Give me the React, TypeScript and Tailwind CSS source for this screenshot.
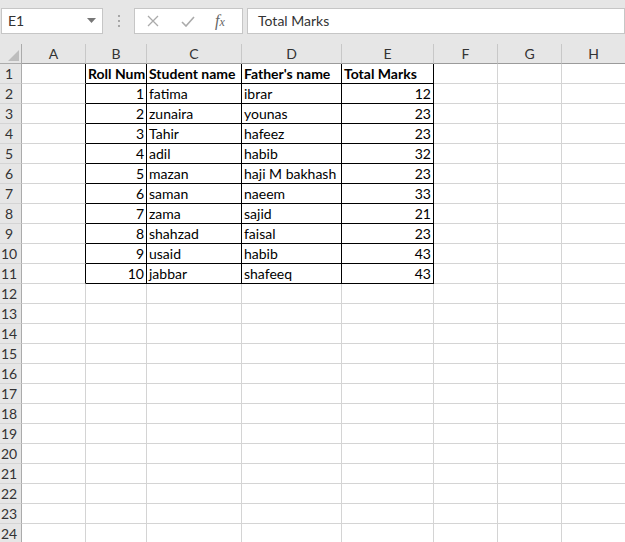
import React from "react";

const cols = [
  { label: "A", w: "w-[64px]" },
  { label: "B", w: "w-[61px]" },
  { label: "C", w: "w-[95px]" },
  { label: "D", w: "w-[100px]" },
  { label: "E", w: "w-[92px]" },
  { label: "F", w: "w-[64px]" },
  { label: "G", w: "w-[64px]" },
  { label: "H", w: "w-[64px]" },
];

const students = [
  [1, "fatima", "ibrar", 12],
  [2, "zunaira", "younas", 23],
  [3, "Tahir", "hafeez", 23],
  [4, "adil", "habib", 32],
  [5, "mazan", "haji M bakhash", 23],
  [6, "saman", "naeem", 33],
  [7, "zama", "sajid", 21],
  [8, "shahzad", "faisal", 23],
  [9, "usaid", "habib", 43],
  [10, "jabbar", "shafeeq", 43],
];

const cellText = (r: number, c: number): { text: string; right?: boolean; bold?: boolean } => {
  if (r === 1) {
    const h = ["", "Roll Num", "Student name", "Father's name", "Total Marks"];
    return { text: h[c] ?? "", bold: true };
  }
  const s = students[r - 2];
  if (!s || c < 1 || c > 4) return { text: "" };
  const v = s[c - 1];
  return { text: String(v), right: c === 1 || c === 4 };
};

const Toolbar = () => (
  <div className="h-[44px] bg-[#e6e6e6] flex items-start pt-[8px] text-[#333]">
    <div className="ml-[1px] w-[102px] h-[26px] bg-white border border-[#c6c6c6] flex items-center justify-between pl-[6px] pr-[6px] pb-[1px] text-[14px]">
      <span>E1</span>
      <svg width="9" height="5" viewBox="0 0 9 5"><path d="M0 0h9L4.5 5z" fill="#777" /></svg>
    </div>
    <div className="w-[31px] h-[26px] flex flex-col items-center justify-center gap-[3px]">
      <span className="w-[2px] h-[2px] bg-[#a6a6a6]" />
      <span className="w-[2px] h-[2px] bg-[#a6a6a6]" />
      <span className="w-[2px] h-[2px] bg-[#a6a6a6]" />
    </div>
    <div className="w-[109px] h-[26px] bg-white border border-[#c6c6c6] flex items-center">
      <svg className="ml-[12px]" width="12" height="12" viewBox="0 0 12 12">
        <path d="M1 1l10 10M11 1L1 11" stroke="#aaa" strokeWidth="1.3" />
      </svg>
      <svg className="ml-[22px]" width="14" height="11" viewBox="0 0 14 11">
        <path d="M1 6l4 4 8-9" stroke="#aaa" strokeWidth="1.6" fill="none" />
      </svg>
      <span
        className="ml-[20px] text-[16px] italic text-[#666] leading-none"
        style={{ fontFamily: "'Liberation Serif', serif" }}
      >
        f<span className="text-[12px]">x</span>
      </span>
    </div>
    <div className="ml-[4px] flex-1 h-[26px] bg-white border border-[#c6c6c6] flex items-center pl-[10px] pb-[1px] text-[14px]">
      Total Marks
    </div>
  </div>
);

export default function App() {
  const rows = Array.from({ length: 24 }, (_, i) => i + 1);
  return (
    <div className="w-[625px] h-[542px] overflow-hidden bg-white" style={{ fontFamily: "Lato, 'Open Sans', sans-serif" }}>
      <Toolbar />
      <div className="flex h-[20px] text-[14px] text-[#333]">
        <div className="w-[22px] shrink-0 bg-[#e6e6e6] border-r border-b border-[#ababab] flex items-end justify-end">
          <svg width="11" height="11" viewBox="0 0 11 11" className="mr-[2px] mb-[2px]"><path d="M11 0v11H0z" fill="#bdbdbd" /></svg>
        </div>
        {cols.map((c) => (
          <div key={c.label} className={`${c.w} shrink-0 bg-[#e6e6e6] border-r border-r-[#c8c8c8] border-b border-b-[#9b9b9b] flex items-center justify-center`}>
            {c.label}
          </div>
        ))}
      </div>
      {rows.map((r) => (
        <div key={r} className="flex h-[20px] text-[14px] text-black">
          <div className="w-[22px] shrink-0 bg-[#e6e6e6] border-r border-r-[#ababab] border-b border-b-[#d4d4d4] flex items-center justify-center pr-[3px] text-[#333]">
            {r}
          </div>
          {cols.map((c, ci) => {
            const inTable = r <= 11 && ci >= 1 && ci <= 4;
            const leftOfTable = r <= 11 && ci === 0;
            const t = cellText(r, ci);
            const br = inTable || leftOfTable ? "border-r-black" : "border-r-[#d4d4d4]";
            const bb = inTable ? "border-b-black" : "border-b-[#d4d4d4]";
            return (
              <div
                key={c.label}
                className={`${c.w} shrink-0 border-r border-b ${br} ${bb} flex items-center px-[2px] whitespace-nowrap overflow-hidden ${t.right ? "justify-end" : "justify-start"} ${t.bold ? "font-bold" : ""}`}
              >
                {t.text}
              </div>
            );
          })}
        </div>
      ))}
    </div>
  );
}
